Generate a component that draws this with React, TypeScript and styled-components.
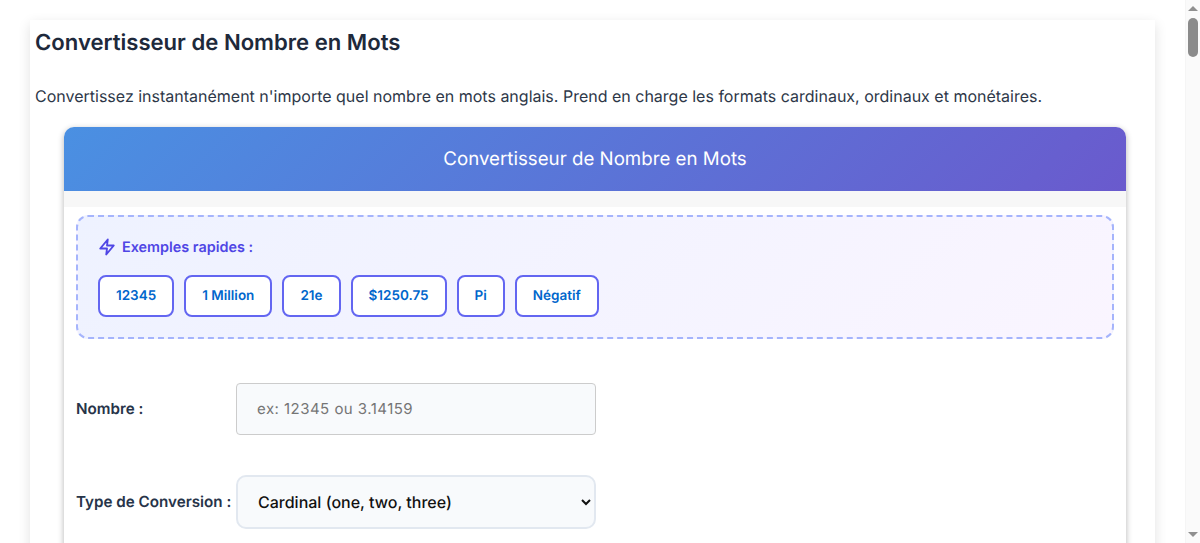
import styled, { createGlobalStyle } from "styled-components";

const GlobalStyle = createGlobalStyle`
  body {
    margin: 0;
    background: #fff;
    font-family: "Inter", "Liberation Sans", sans-serif;
    color: #1f2937;
    text-rendering: geometricPrecision;
  }
`;

const Page = styled.main`
  padding: 20px 45px 30px 30px;
`;

// the browser hides its own scrollbar when photographed, so it is drawn here
const Scrollbar = styled.div`
  position: fixed;
  top: 0;
  right: 0;
  bottom: 0;
  width: 15px;
  background: #fafafa;
  border-left: 1px solid #f5f5f5;
  box-sizing: border-box;
`;

const ScrollArrow = styled.div<{ $down?: boolean }>`
  position: absolute;
  left: 2px;
  ${(p) => (p.$down ? "bottom: 6px;" : "top: 6px;")}
  width: 0;
  height: 0;
  border-left: 5px solid transparent;
  border-right: 5px solid transparent;
  ${(p) => (p.$down ? "border-top" : "border-bottom")}: 5px solid #8f8f8f;
`;

const ScrollThumb = styled.div`
  position: absolute;
  top: 18px;
  left: 2px;
  width: 10px;
  height: 39px;
  border-radius: 5px;
  background: #8b8b8b;
`;

const Article = styled.article`
  padding: 5px;
  background: #fff;
  box-shadow: 0 4px 12px rgba(0, 0, 0, 0.12);
`;

const Title = styled.h1`
  margin: 1px 0 0;
  font-size: 22.1px;
  line-height: 34px;
  font-weight: 600;
  color: #1e293b;
`;

const Intro = styled.p`
  margin: 24px 0 0;
  font-size: 16px;
  line-height: 24px;
  color: #2d3748;
`;

const Widget = styled.section`
  margin: 19px 24px 0 29px;
  min-height: 6800px;
  border-radius: 10px 10px 0 0;
  background: #fff;
  box-shadow: 0 2px 6px rgba(0, 0, 0, 0.3);
`;

const Header = styled.header`
  height: 64px;
  display: flex;
  align-items: center;
  justify-content: center;
  border-radius: 10px 10px 0 0;
  background: linear-gradient(135deg, #4a90e2, #6a5acd);
  color: #fff;
  font-size: 18.72px;
  padding-bottom: 1px;
  box-sizing: border-box;
`;

const Band = styled.div`
  height: 16px;
  background: #f7f7f7;
`;

const Body = styled.div`
  padding: 8px 12px 0;
`;

const Examples = styled.div`
  height: 124px;
  box-sizing: border-box;
  padding: 20px 20px 0;
  border: 2px dashed #a5b4fc;
  border-radius: 12px;
  background: linear-gradient(135deg, #eef2ff, #faf5ff);
`;

const ExamplesTitle = styled.div`
  display: flex;
  align-items: center;
  gap: 6px;
  height: 20px;
  font-size: 14.4px;
  font-weight: 600;
  color: #4f46e5;
`;

const ChipRow = styled.div`
  display: flex;
  gap: 10px;
  margin-top: 18px;
`;

const Chip = styled.button`
  height: 42px;
  padding: 0 16px;
  border: 2px solid #6366f1;
  border-radius: 8px;
  background: #fff;
  font-family: inherit;
  font-size: 13.5px;
  font-weight: 600;
  color: #0066cc;
  text-rendering: inherit;
`;

const Field = styled.div<{ $top: number }>`
  display: flex;
  align-items: center;
  margin-top: ${(p) => p.$top}px;
`;

const Label = styled.label`
  width: 160px;
  flex: none;
  margin-top: -2px;
  font-size: 15.2px;
  font-weight: 600;
  white-space: nowrap;
  color: #273449;
`;

const NumberInput = styled.input`
  width: 360px;
  height: 52px;
  box-sizing: border-box;
  padding: 0 20px 2px;
  border: 1px solid #ccc;
  border-radius: 4px;
  background: #f8fafc;
  font-family: "Inter", sans-serif;
  font-size: 15px;
  letter-spacing: 0.47px;
  text-rendering: inherit;

  &::placeholder {
    color: #757575;
  }
`;

const TypeSelect = styled.select`
  width: 360px;
  height: 54px;
  box-sizing: border-box;
  padding: 0 16px;
  border: 2px solid #e2e8f0;
  border-radius: 10px;
  background: #f8fafc;
  font-family: inherit;
  font-size: 16px;
  font-weight: 500;
  color: #111;
  text-rendering: inherit;
`;

const chips = ["12345", "1 Million", "21e", "$1250.75", "Pi", "Négatif"];

export default function App() {
  return (
    <>
      <GlobalStyle />
      <Page>
        <Article>
          <Title>Convertisseur de Nombre en Mots</Title>
          <Intro>
            Convertissez instantanément n'importe quel nombre en mots anglais. Prend en charge les
            formats cardinaux, ordinaux et monétaires.
          </Intro>
          <Widget>
            <Header>Convertisseur de Nombre en Mots</Header>
            <Band />
            <Body>
              <Examples>
                <ExamplesTitle>
                  <svg
                    width="18"
                    height="18"
                    viewBox="0 0 24 24"
                    fill="none"
                    stroke="currentColor"
                    strokeWidth="2.5"
                    strokeLinecap="round"
                    strokeLinejoin="round"
                  >
                    <path d="M13 2 3 14h9l-1 8 10-12h-9l1-8z" />
                  </svg>
                  Exemples rapides :
                </ExamplesTitle>
                <ChipRow>
                  {chips.map((chip) => (
                    <Chip key={chip}>{chip}</Chip>
                  ))}
                </ChipRow>
              </Examples>
              <Field $top={44}>
                <Label htmlFor="number">Nombre :</Label>
                <NumberInput id="number" placeholder="ex: 12345 ou 3.14159" />
              </Field>
              <Field $top={40}>
                <Label htmlFor="type">Type de Conversion :</Label>
                <TypeSelect id="type" defaultValue="cardinal">
                  <option value="cardinal">Cardinal (one, two, three)</option>
                  <option value="ordinal">Ordinal (first, second, third)</option>
                  <option value="currency">Monétaire (dollars et cents)</option>
                </TypeSelect>
              </Field>
            </Body>
          </Widget>
        </Article>
      </Page>
      <Scrollbar>
        <ScrollArrow />
        <ScrollThumb />
        <ScrollArrow $down />
      </Scrollbar>
    </>
  );
}
